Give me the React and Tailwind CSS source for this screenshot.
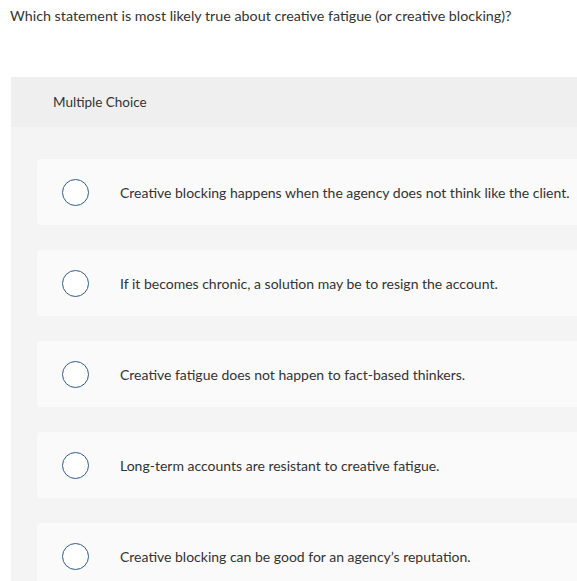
import React from "react";

const options = [
  "Creative blocking happens when the agency does not think like the client.",
  "If it becomes chronic, a solution may be to resign the account.",
  "Creative fatigue does not happen to fact-based thinkers.",
  "Long-term accounts are resistant to creative fatigue.",
  "Creative blocking can be good for an agency’s reputation.",
];

const Option = ({ text }) => (
  <label className="flex items-center h-[66px] pl-[25px] rounded-[4px] bg-[#fafafa] cursor-pointer">
    <span className="w-[27px] h-[27px] shrink-0 rounded-full border-[1.5px] border-[#2d5c8c] bg-white"></span>
    <span className="ml-[31px] text-[14px] text-[#333]">{text}</span>
  </label>
);

export default function App() {
  return (
    <div className="w-[577px] h-[581px] overflow-hidden bg-white font-['Lato',sans-serif]">
      <p className="pl-[10px] pt-[6px] h-[77px] text-[14.3px] leading-[20px] text-[#333]">
        Which statement is most likely true about creative fatigue (or creative blocking)?
      </p>

      <div className="ml-[11px] w-[620px] bg-[#f4f4f4]">
        {/* Header */}
        <div className="h-[50px] flex items-center pl-[42px] bg-[#efefef] text-[13.5px] text-[#333]">
          Multiple Choice
        </div>

        {/* Options */}
        <div className="pl-[26px] pt-[32px] flex flex-col gap-[25px]">
          {options.map((o) => (
            <Option key={o} text={o} />
          ))}
        </div>
      </div>
    </div>
  );
}
